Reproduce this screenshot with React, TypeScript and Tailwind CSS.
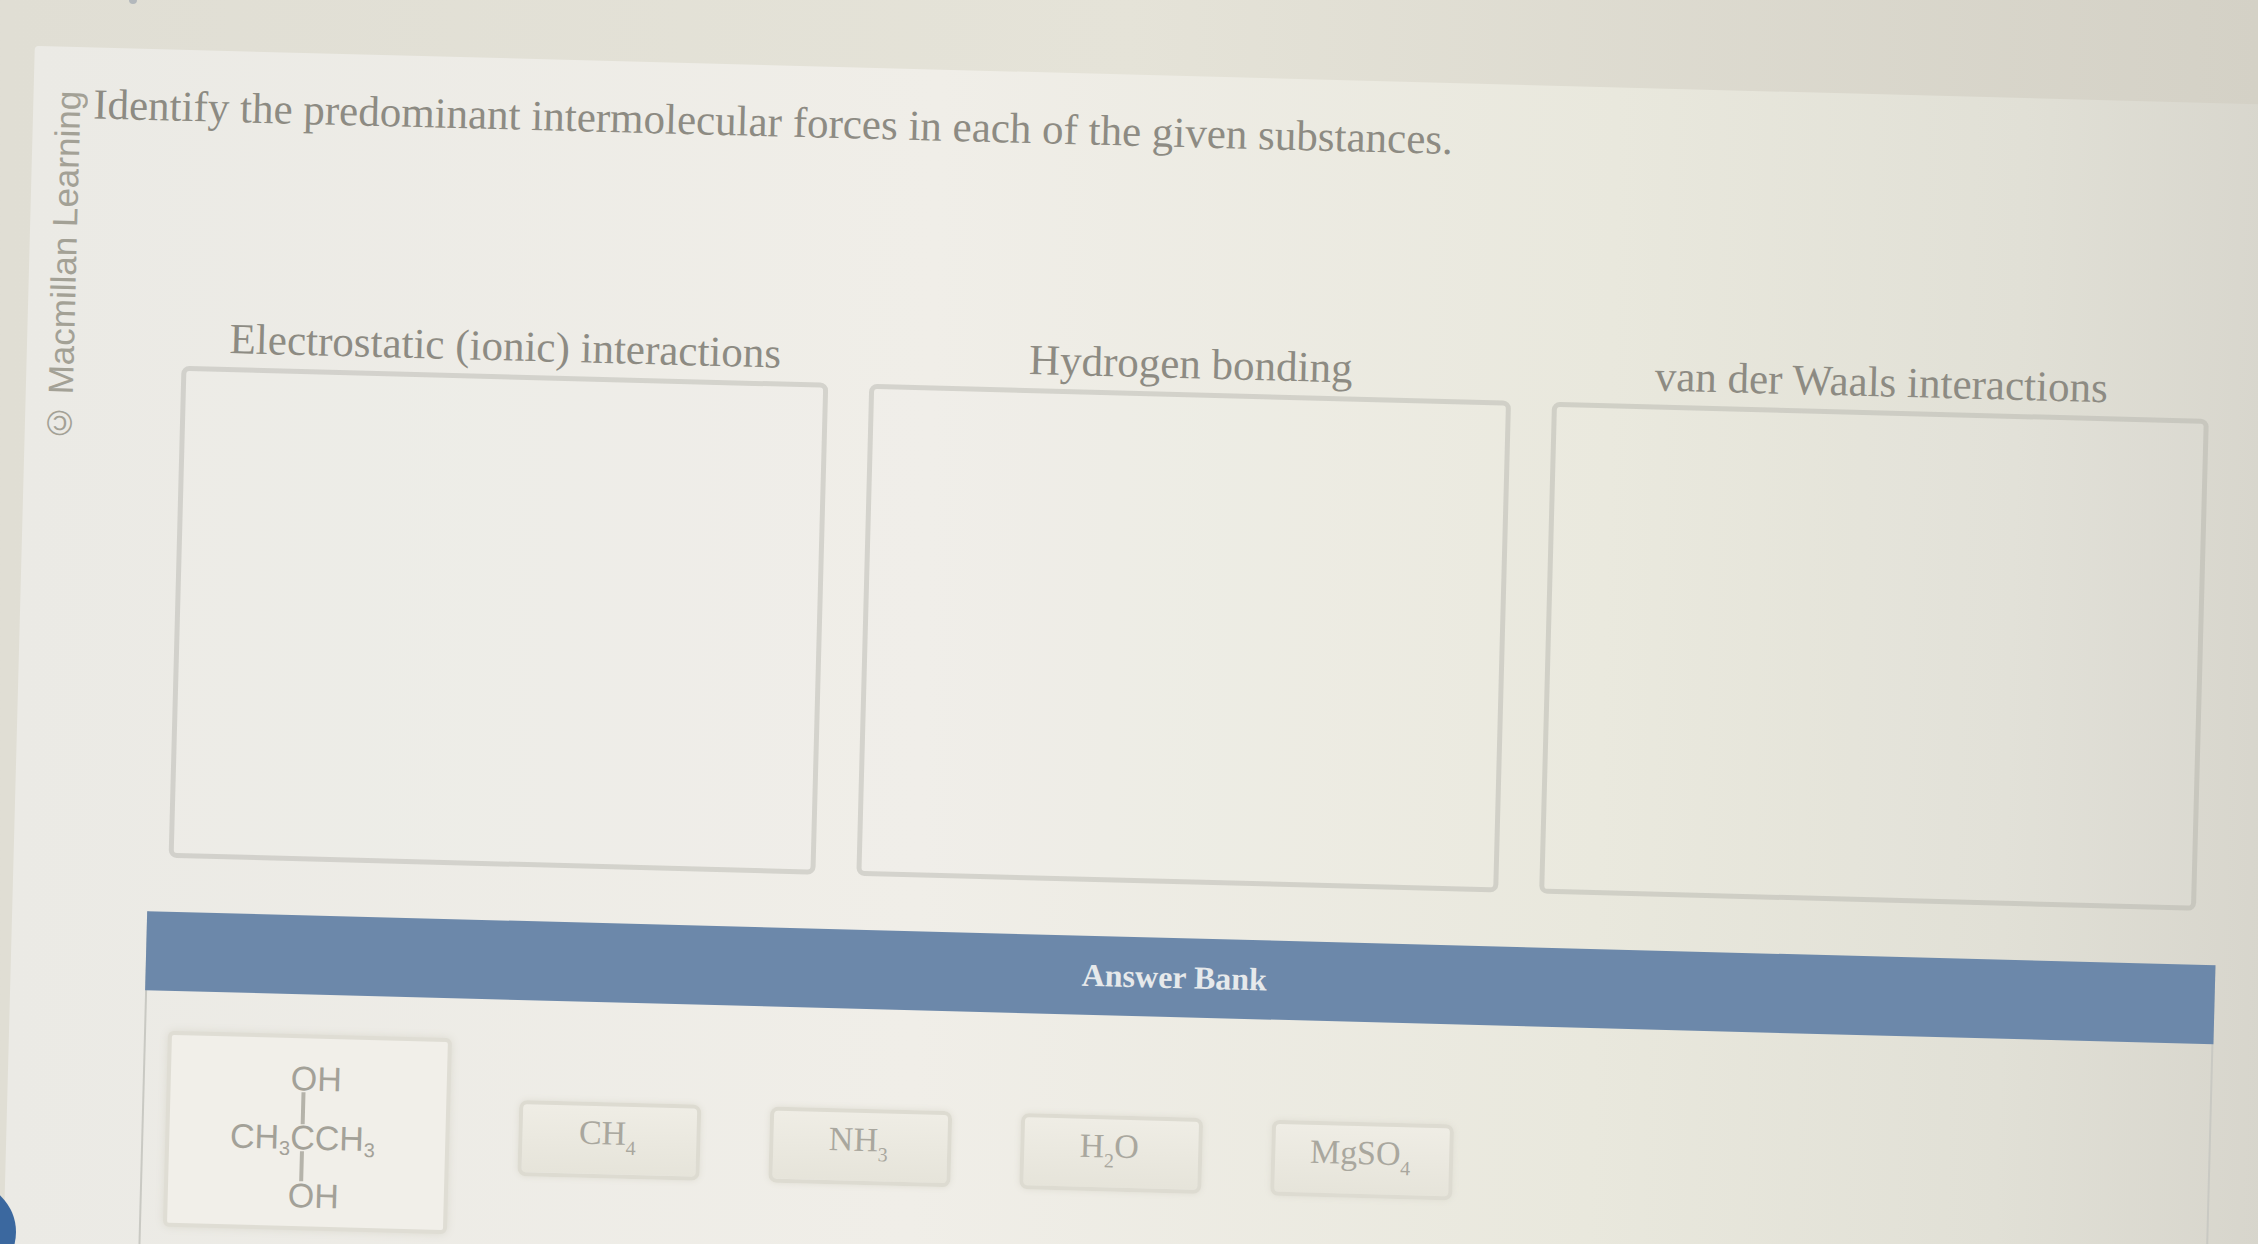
import React from "react";

const bins = [
  "Electrostatic (ionic) interactions",
  "Hydrogen bonding",
  "van der Waals interactions",
];

const formulas: { name: string; label: React.ReactNode }[] = [
  { name: "methane", label: <>CH<Sub>4</Sub></> },
  { name: "ammonia", label: <>NH<Sub>3</Sub></> },
  { name: "water", label: <>H<Sub>2</Sub>O</> },
  { name: "magnesium sulfate", label: <>MgSO<Sub>4</Sub></> },
];

function Sub({ children }: { children: React.ReactNode }) {
  return <sub className="bottom-0 align-[-10px] text-[20px] leading-none">{children}</sub>;
}

function Diol() {
  return (
    <svg
      viewBox="0 0 276 188"
      className="h-[188px] w-[276px] fill-[#a3a198] font-['Liberation_Sans',sans-serif] text-[34px]"
      role="img"
      aria-label="propane-2,2-diol"
    >
      <text x="120" y="52">OH</text>
      <text x="121" y="111" textAnchor="end">
        CH<tspan dy="6" className="text-[20px]">3</tspan>
      </text>
      <text x="121" y="111">
        CCH<tspan dy="6" className="text-[20px]">3</tspan>
      </text>
      <text x="120" y="169">OH</text>
      <path d="M133 54V86M133 113V143" className="stroke-[#b5b3aa]" strokeWidth="4" />
    </svg>
  );
}

export default function App() {
  return (
    <div className="relative h-screen overflow-hidden bg-linear-to-r from-[#e0ded4] via-[#e5e3d8] to-[#d4d1c6] font-['Liberation_Serif',serif] text-[#8d8b83]">
      <div className="flex min-h-screen origin-top-left rotate-[1.5deg] flex-col pt-[45px]">
        <main className="-mr-10 ml-[36px] flex flex-1 rounded-tl-sm bg-[linear-gradient(to_right,#ebeae5,#f0eee8_40%,#e9e8dd_70%,#e1e0d6_88%,#d7d5cc)]">
          <aside className="w-[60px] shrink-0 pt-[44px] pl-[15px] font-['Liberation_Sans',sans-serif] text-[35px] leading-[40px] whitespace-nowrap text-[#a3a196]">
            <span className="block rotate-180 [writing-mode:vertical-rl]">© Macmillan Learning</span>
          </aside>
          <div className="flex flex-1 flex-col pr-[58px]">
            <h1 className="pt-[33px] text-[43px] leading-[48px]">
              Identify the predominant intermolecular forces in each of the given substances.
            </h1>

            <div className="mt-[183px] mr-[21px] ml-[95px] grid grid-cols-[646fr_642fr_656fr] gap-[41px]">
              {bins.map((bin) => (
                <section key={bin} aria-label={bin}>
                  <h2 className="text-center text-[43px] leading-[48px]">{bin}</h2>
                  <div className="mt-[4px] h-[492px] rounded-lg border-[5px] border-[#a9aaa2]/40 bg-white/5" />
                </section>
              ))}
            </div>

            <section className="mt-[54px] ml-[75px] flex flex-1 flex-col border-x-2 border-[#c9c9c3]" aria-labelledby="bank">
              <h2
                id="bank"
                className="-mx-[2px] bg-[#6c88aa] pr-3 text-center text-[32px] leading-[79px] font-bold text-[#e6e9eb]"
              >
                Answer Bank
              </h2>
              <div className="flex items-center gap-[69px] px-[22px] pt-[40px] pb-20">
                <button
                  type="button"
                  className="rounded-md border-4 border-[#dfddd4] bg-[#f1efe9] shadow-[0_0_8px_#dcdad0]"
                >
                  <Diol />
                </button>
                {formulas.map((f) => (
                  <button
                    key={f.name}
                    type="button"
                    aria-label={f.name}
                    className="h-[76px] w-[182px] rounded-lg border-4 border-[#dddbd1] bg-linear-to-b from-[#efede5] to-[#e6e4da] pr-1 pb-2 text-[34px] leading-none text-[#a9a79e] shadow-[0_0_6px_#dfddd3]"
                  >
                    {f.label}
                  </button>
                ))}
              </div>
            </section>
          </div>
        </main>
      </div>

      <div className="absolute -bottom-[38px] -left-[84px] size-[100px] rounded-full bg-[#3b689f]" />
      <div className="absolute top-0 left-[129px] h-[4px] w-[8px] rounded-b-full bg-[#b3b8bc]" />
    </div>
  );
}
